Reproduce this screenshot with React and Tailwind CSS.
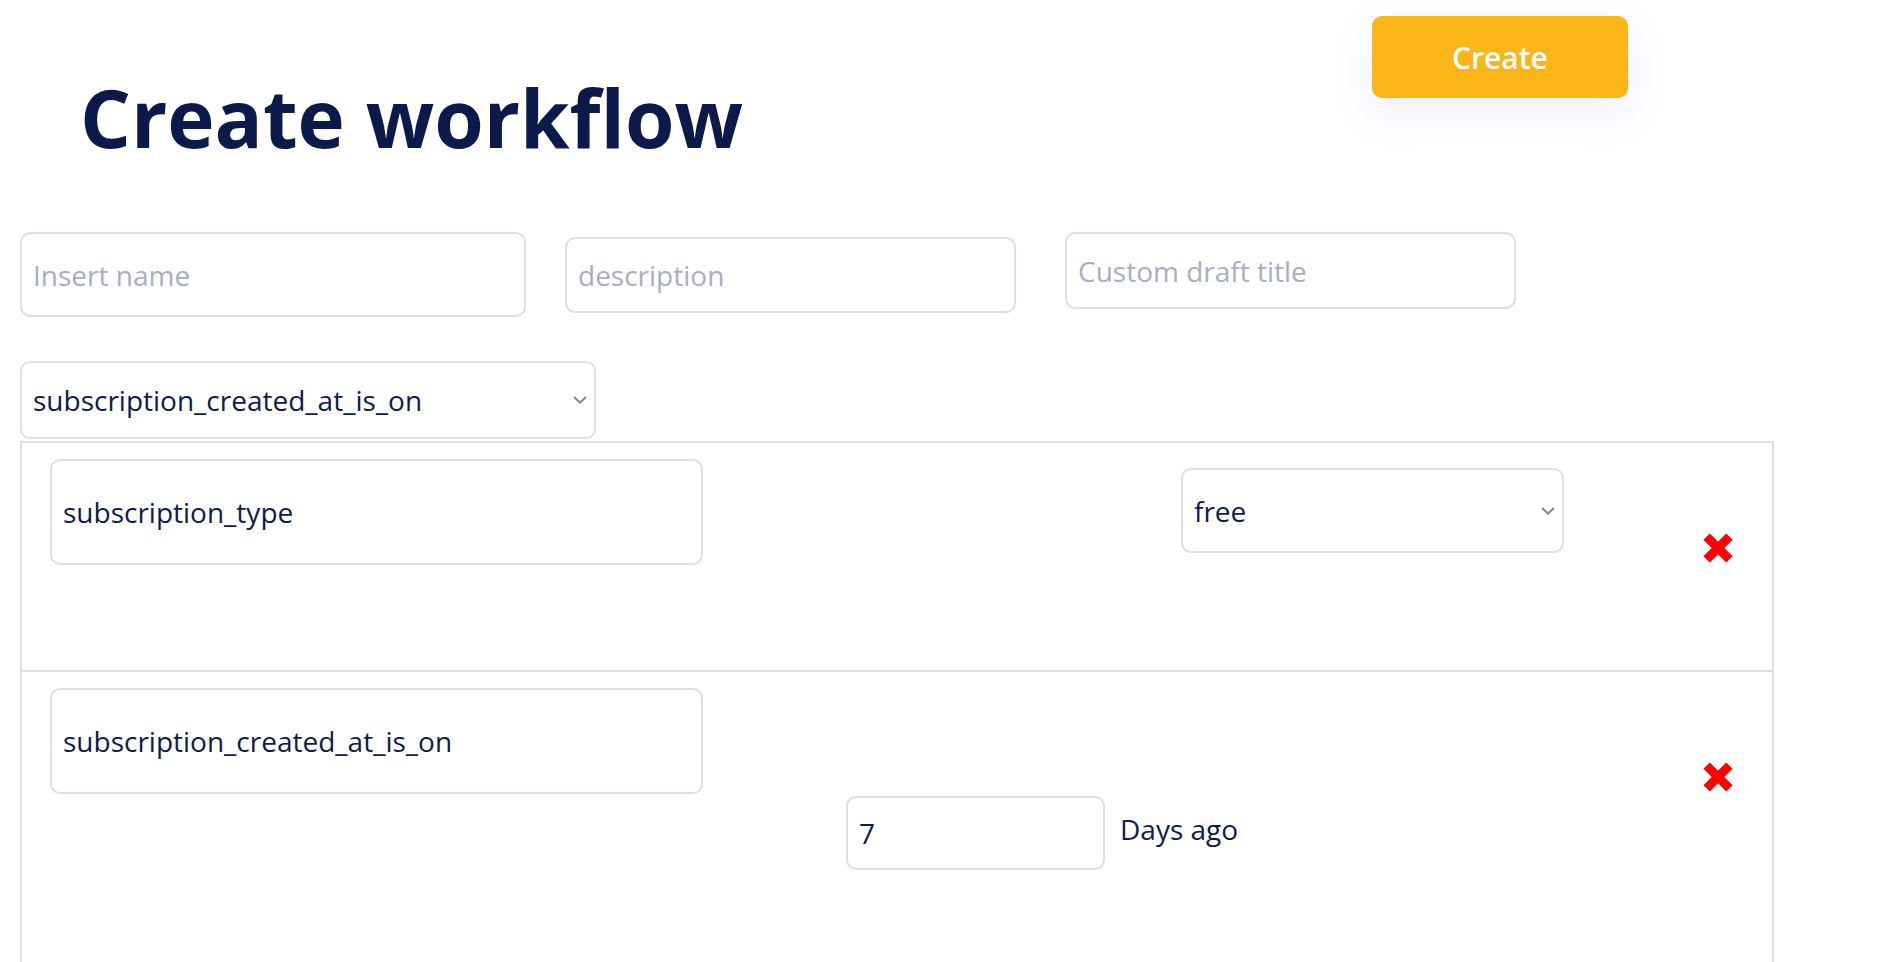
import React from "react";

const inputBase =
  "border-2 border-[#dddde5] rounded-[10px] bg-white px-[11px] text-[28px] text-[#0e1b4d] placeholder:text-[#a9adc1] outline-none";

const Chevron = () => (
  <svg
    viewBox="0 0 14 8"
    className="pointer-events-none absolute right-[9px] top-1/2 h-[8px] w-[14px] -translate-y-1/2"
    fill="none"
    stroke="#8a8a8a"
    strokeWidth="2.2"
  >
    <path d="M1 1l6 5.5L13 1" />
  </svg>
);

const SelectBox = ({ value, options, className }) => (
  <div className={`relative ${className}`}>
    <select
      defaultValue={value}
      className={`${inputBase} h-full w-full appearance-none pr-[30px]`}
    >
      {options.map((o) => (
        <option key={o}>{o}</option>
      ))}
    </select>
    <Chevron />
  </div>
);

const RemoveIcon = () => (
  <button className="mt-[90px] h-[30px] w-[30px] shrink-0" aria-label="Remove">
    <svg viewBox="0 0 30 30" className="h-[30px] w-[30px]">
      <path
        d="M3.6 3.6L26.4 26.4M26.4 3.6L3.6 26.4"
        stroke="#ff0000"
        strokeWidth="9"
        strokeLinecap="butt"
      />
    </svg>
  </button>
);

const conditions = [
  "subscription_created_at_is_on",
  "subscription_type",
  "subscription_status",
];

export default function App() {
  return (
    <div className="min-h-screen w-full bg-white font-['Open_Sans',sans-serif] text-[#0e1b4d]">
      <div className="flex items-start">
        <h1 className="ml-[80px] mt-[77px] text-[80px] font-bold leading-none text-[#0c1a4b]">
          Create workflow
        </h1>
        <button className="ml-auto mr-[272px] mt-[16px] h-[82px] w-[256px] rounded-[10px] bg-[#fab517] text-[30px] font-semibold text-white shadow-[0_14px_40px_rgba(120,140,230,0.14)]">
          Create
        </button>
      </div>

      <div className="ml-[20px] mt-[75px] flex items-start">
        <input
          placeholder="Insert name"
          className={`${inputBase} h-[85px] w-[506px]`}
        />
        <input
          placeholder="description"
          className={`${inputBase} ml-[39px] mt-[5px] h-[76px] w-[451px]`}
        />
        <input
          placeholder="Custom draft title"
          className={`${inputBase} ml-[49px] h-[77px] w-[451px]`}
        />
      </div>

      <SelectBox
        value="subscription_created_at_is_on"
        options={conditions}
        className="ml-[20px] mt-[44px] h-[78px] w-[576px]"
      />

      <div className="ml-[20px] mt-[2px] w-[1754px] border-2 border-[#dddde5]">
        <div className="flex h-[229px] items-start border-b-2 border-[#dddde5] pl-[28px] pr-[39px]">
          <input
            defaultValue="subscription_type"
            className={`${inputBase} mt-[16px] h-[106px] w-[653px] shrink-0`}
          />
          <div className="flex-1 pl-[478px] pt-[25px]">
            <SelectBox
              value="free"
              options={["free", "paid", "trial"]}
              className="h-[85px] w-[383px]"
            />
          </div>
          <RemoveIcon />
        </div>

        <div className="flex h-[320px] items-start pl-[28px] pr-[39px]">
          <input
            defaultValue="subscription_created_at_is_on"
            className={`${inputBase} mt-[16px] h-[106px] w-[653px] shrink-0`}
          />
          <div className="flex flex-1 items-start pl-[143px] pt-[124px]">
            <input
              type="number"
              defaultValue="7"
              className={`${inputBase} h-[74px] w-[259px]`}
            />
            <span className="ml-[15px] mt-[13px] text-[28px] leading-[40px]">
              Days ago
            </span>
          </div>
          <RemoveIcon />
        </div>
      </div>
    </div>
  );
}
